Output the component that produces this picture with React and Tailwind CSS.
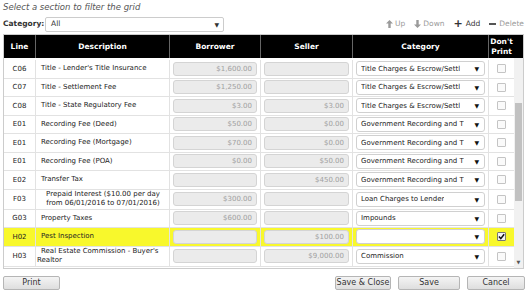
import React from 'react';

const rows = [
    { line: 'C06', desc: "Title - Lender's Title Insurance", borrower: '$1,600.00', seller: '', cat: 'Title Charges & Escrow/Settl' },
    { line: 'C07', desc: 'Title - Settlement Fee', borrower: '$1,250.00', seller: '', cat: 'Title Charges & Escrow/Settl' },
    { line: 'C08', desc: 'Title - State Regulatory Fee', borrower: '$3.00', seller: '$3.00', cat: 'Title Charges & Escrow/Settl' },
    { line: 'E01', desc: 'Recording Fee (Deed)', borrower: '$50.00', seller: '$0.00', cat: 'Government Recording and T' },
    { line: 'E01', desc: 'Recording Fee (Mortgage)', borrower: '$70.00', seller: '$0.00', cat: 'Government Recording and T' },
    { line: 'E01', desc: 'Recording Fee (POA)', borrower: '$0.00', seller: '$50.00', cat: 'Government Recording and T' },
    { line: 'E02', desc: 'Transfer Tax', borrower: '', seller: '$450.00', cat: 'Government Recording and T' },
    { line: 'F03', desc: 'Prepaid Interest ($10.00 per day from 06/01/2016 to 07/01/2016)', borrower: '$300.00', seller: '', cat: 'Loan Charges to Lender', tall: true, center: true },
    { line: 'G03', desc: 'Property Taxes', borrower: '$600.00', seller: '', cat: 'Impounds' },
    { line: 'H02', desc: 'Pest Inspection', borrower: '', seller: '$100.00', cat: '', selected: true },
    { line: 'H03', desc: "Real Estate Commission - Buyer's Realtor", borrower: '', seller: '$9,000.00', cat: 'Commission', tall: true },
];

const font = { fontFamily: '"DejaVu Sans", Verdana, sans-serif' };

const Arrow = ({ down }) => (
    <svg width="7" height="8" viewBox="0 0 7 8" className={down ? 'rotate-180' : ''}>
        <path d="M3.5 0 L7 3.5 H4.7 V8 H2.3 V3.5 H0 Z" fill="currentColor" />
    </svg>
);

const Money = ({ value }) => (
    <div className="h-[14px] w-full rounded-[3px] border border-[#d4d4d4] bg-[#ebebeb] px-[4px] text-right leading-[12px] text-[#a0a0a0]">
        {value}
    </div>
);

const Row = ({ r }) => (
    <div className={`grid grid-cols-[32px_134px_91px_92px_136px_25px] border-b border-[#e2e2e2] ${r.selected ? 'bg-[#f8f82c]' : 'bg-white'} ${r.tall ? 'h-[20px]' : 'h-[18.5px]'}`}>
        <div className="flex items-center justify-center border-r border-[#e2e2e2] text-[#222]">{r.line}</div>
        <div className={`flex items-center border-r border-[#e2e2e2] pl-[1px] leading-[9px] text-[#222] ${r.center ? 'justify-center text-center' : 'indent-[4px]'}`}>
            <span>{r.desc}</span>
        </div>
        <div className="flex items-center border-r border-[#e2e2e2] px-[3px]"><Money value={r.borrower} /></div>
        <div className="flex items-center border-r border-[#e2e2e2] px-[3px]"><Money value={r.seller} /></div>
        <div className="flex items-center border-r border-[#e2e2e2] px-[3px]">
            <div className="flex h-[15px] w-full items-center justify-between rounded-[3px] border border-[#d0d0d0] bg-white pl-[4px] pr-[5px] text-[#222]">
                <span className="overflow-hidden whitespace-nowrap">{r.cat}</span>
                <span className="text-[6px] text-[#111]">▼</span>
            </div>
        </div>
        <div className="flex items-center justify-center">
            <div className={`flex h-[9px] w-[9px] items-center justify-center rounded-[1px] border ${r.selected ? 'border-[#777] bg-[#f4f4f4]' : 'border-[#c4c4c4] bg-[#fafafa]'}`}>
                {r.selected && (
                    <svg width="7" height="7" viewBox="0 0 6 6"><path d="M0.8 3 L2.4 4.8 L5.3 1" stroke="#111" strokeWidth="1.3" fill="none" /></svg>
                )}
            </div>
        </div>
    </div>
);

const Button = ({ children, className }) => (
    <button className={`h-[14px] rounded-[2px] border border-[#b5b5b5] bg-gradient-to-b from-[#f4f4f4] to-[#dedede] text-[8px] leading-[12px] text-[#333] ${className}`}>
        {children}
    </button>
);

export default function App() {
    return (
        <div className="h-[290px] w-[528px] overflow-hidden bg-white px-[3px] pt-[2px]" style={font}>
            <div className="text-[8.5px] italic leading-[10px] text-[#555]">Select a section to filter the grid</div>

            <div className="mt-[4px] flex h-[16px] items-center justify-between">
                <div className="flex items-center">
                    <span className="w-[42px] whitespace-nowrap text-[7.5px] font-bold text-[#333]">Category:</span>
                    <div className="flex h-[15px] w-[179px] items-center justify-between rounded-[2px] border border-[#ccc] bg-white pl-[5px] pr-[4px] text-[7.5px] text-[#333]">
                        <span>All</span>
                        <span className="text-[6px]">▼</span>
                    </div>
                </div>
                <div className="flex items-center gap-[9px] pr-[1px] text-[7.5px]">
                    <span className="flex items-center gap-[2px] text-[#9a9a9a]"><Arrow />Up</span>
                    <span className="flex items-center gap-[2px] text-[#9a9a9a]"><Arrow down />Down</span>
                    <span className="flex items-center gap-[3px] text-[#333]"><span className="text-[11px] font-bold leading-[8px]">+</span>Add</span>
                    <span className="flex items-center gap-[3px] text-[#9a9a9a]"><span className="inline-block h-[2px] w-[7px] bg-[#555]" />Delete</span>
                </div>
            </div>

            <div className="mt-[2px] w-[521px] border border-[#ccc]">
                <div className="grid h-[23px] grid-cols-[32px_134px_91px_92px_136px_25px_11px] bg-black text-[7.5px] font-bold text-white">
                    <div className="flex items-center justify-center border-r border-[#666]">Line</div>
                    <div className="flex items-center justify-center border-r border-[#666]">Description</div>
                    <div className="flex items-center justify-center border-r border-[#666]">Borrower</div>
                    <div className="flex items-center justify-center border-r border-[#666]">Seller</div>
                    <div className="flex items-center justify-center border-r border-[#666]">Category</div>
                    <div className="flex items-center justify-center text-center leading-[10px]">Don't<br />Print</div>
                    <div />
                </div>
                <div className="flex h-[210px] overflow-hidden">
                    <div className="w-[510px] pt-[2px] text-[7px]">
                        {rows.map((r, i) => <Row key={i} r={r} />)}
                    </div>
                    <div className="flex w-[11px] flex-col bg-[#f1f1f1]">
                        <div className="h-[45px]" />
                        <div className="mx-[1px] h-[98px] bg-[#c1c1c1]" />
                        <div className="flex-1" />
                        <div className="flex h-[10px] items-center justify-center text-[5px] text-[#555]">▼</div>
                    </div>
                </div>
            </div>

            <div className="mt-[7px] flex items-center justify-between">
                <Button className="w-[57px]">Print</Button>
                <div className="flex gap-[7px]">
                    <Button className="w-[56px]">Save &amp; Close</Button>
                    <Button className="w-[62px]">Save</Button>
                    <Button className="w-[58px]">Cancel</Button>
                </div>
            </div>
        </div>
    );
}
